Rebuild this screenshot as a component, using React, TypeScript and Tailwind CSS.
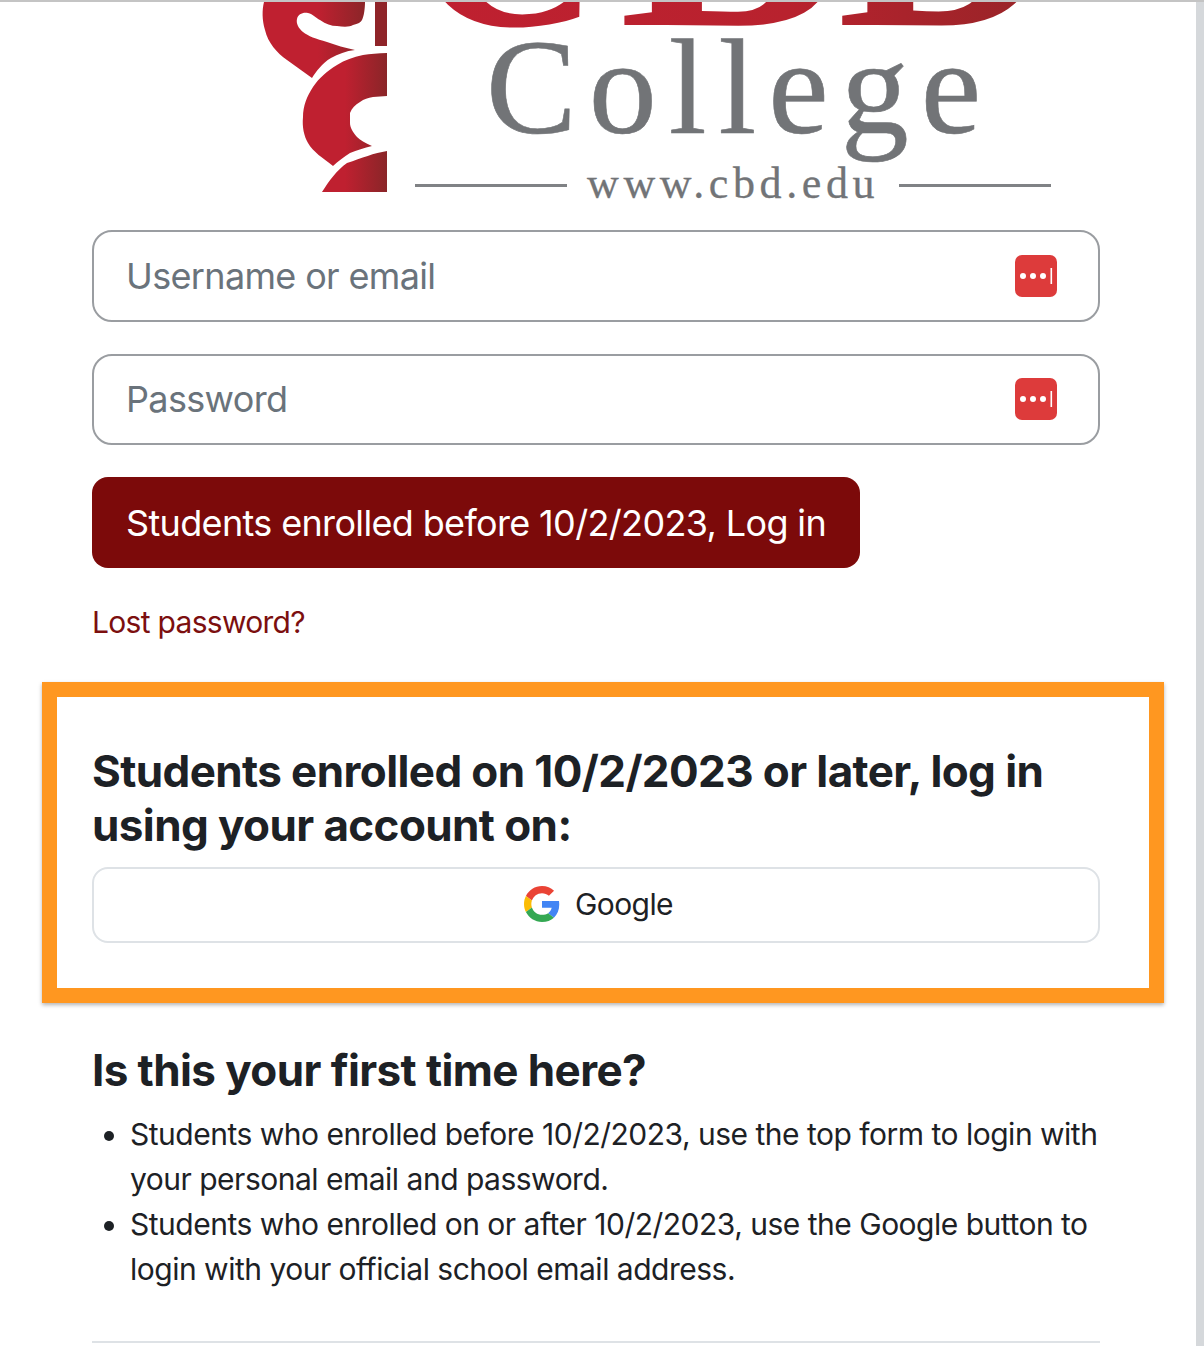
import React from 'react';

const LastPassIcon: React.FC = () => (
  <svg viewBox="0 0 42 42" className="absolute right-[43px] top-1/2 h-[42px] w-[42px] -translate-y-1/2">
    <rect width="42" height="42" rx="7" fill="#dd3b3b" />
    <circle cx="8" cy="21" r="3" fill="#fff" />
    <circle cx="18" cy="21" r="3" fill="#fff" />
    <circle cx="28" cy="21" r="3" fill="#fff" />
    <rect x="35.5" y="13" width="1.6" height="16" fill="#fff" />
  </svg>
);

const GoogleIcon: React.FC = () => (
  <svg viewBox="0 0 48 48" className="h-[36px] w-[36px]">
    <path fill="#EA4335" d="M24 9.5c3.54 0 6.71 1.22 9.21 3.6l6.85-6.85C35.9 2.38 30.47 0 24 0 14.62 0 6.51 5.38 2.56 13.22l7.98 6.19C12.43 13.72 17.74 9.5 24 9.5z" />
    <path fill="#4285F4" d="M46.98 24.55c0-1.57-.15-3.09-.38-4.55H24v9.02h12.94c-.58 2.96-2.26 5.48-4.78 7.18l7.73 6c4.51-4.18 7.09-10.36 7.09-17.65z" />
    <path fill="#FBBC05" d="M10.53 28.59c-.48-1.45-.76-2.99-.76-4.59s.27-3.14.76-4.59l-7.98-6.19C.92 16.46 0 20.12 0 24c0 3.88.92 7.54 2.56 10.78l7.97-6.19z" />
    <path fill="#34A853" d="M24 48c6.48 0 11.93-2.13 15.89-5.81l-7.73-6c-2.15 1.45-4.92 2.3-8.16 2.3-6.26 0-11.57-4.22-13.47-9.91l-7.98 6.19C6.51 42.62 14.62 48 24 48z" />
  </svg>
);

const Logo: React.FC = () => (
  <svg viewBox="260 2 800 228" className="ml-[260px] block h-[228px] w-[800px]">
    <defs>
      <linearGradient id="snakeTop" gradientUnits="userSpaceOnUse" x1="318" y1="0" x2="366" y2="0">
        <stop offset="0" stopColor="#bf2030" />
        <stop offset="1" stopColor="#8a2528" />
      </linearGradient>
      <linearGradient id="snakeMid" gradientUnits="userSpaceOnUse" x1="345" y1="0" x2="387" y2="0">
        <stop offset="0" stopColor="#bf2030" />
        <stop offset="1" stopColor="#8a2528" />
      </linearGradient>
      <linearGradient id="letters" gradientUnits="userSpaceOnUse" x1="440" y1="0" x2="1020" y2="0">
        <stop offset="0" stopColor="#bf2030" />
        <stop offset="0.6" stopColor="#b8222e" />
        <stop offset="1" stopColor="#9a2428" />
      </linearGradient>
    </defs>
    <path
      fill="url(#snakeTop)"
      d="M264 2C262 10 262 20 265 30C268 43 277 53 287 60L312 78C316 72 322 63 331 58C338 54 346 51 355 50C345 48 336 45 327 42C316 39 308 36 303 32C298 28 296 23 297 19C298 14 303 12 308 13C313 14 316 18 320 20C326 24 331 26 337 26C344 27 350 27 353 25C358 24 361 22 362 20C364 16 365 8 365 2Z"
    />
    <rect x="375" y="2" width="12" height="44" fill="#8f2429" />
    <path
      fill="url(#snakeMid)"
      d="M387 53C378 53 370 54 363 55C353 57 345 60 337 65C327 71 319 78 313 87C307 96 303 106 303 117C302 127 304 136 308 143C313 152 323 158 333 166C338 161 344 157 350 153C357 150 364 148 372 146C365 143 360 140 357 137C353 132 350 128 350 123V113C352 108 355 105 360 102C364 99 368 98 373 97L387 96Z"
    />
    <path fill="url(#snakeMid)" d="M387 151C374 153 362 158 347 163C337 170 329 181 322 192H387Z" />
    <text y="25" x="411" textLength="189" lengthAdjust="spacingAndGlyphs" fontFamily="'Liberation Serif', serif" fontWeight="700" fontSize="262" fill="url(#letters)">
      C
    </text>
    <text y="25" x="619" textLength="217" lengthAdjust="spacingAndGlyphs" fontFamily="'Liberation Serif', serif" fontWeight="700" fontSize="262" fill="url(#letters)">
      B
    </text>
    <text y="25" x="837" textLength="216" lengthAdjust="spacingAndGlyphs" fontFamily="'Liberation Serif', serif" fontWeight="700" fontSize="262" fill="url(#letters)">
      D
    </text>
    <text x="486" y="133" fontFamily="'Liberation Serif', serif" fontSize="136" letterSpacing="12" fill="#727477" stroke="#727477" strokeWidth="0.6">
      College
    </text>
    <rect x="415" y="184" width="152" height="3" fill="#808285" />
    <text x="587" y="198" fontFamily="'Liberation Serif', serif" fontSize="44" letterSpacing="4.6" fill="#727477" stroke="#727477" strokeWidth="0.3">
      www.cbd.edu
    </text>
    <rect x="899" y="184" width="152" height="3" fill="#808285" />
  </svg>
);

const LoginField: React.FC<{ placeholder: string; type?: string }> = ({ placeholder, type = 'text' }) => (
  <div className="relative">
    <input
      type={type}
      placeholder={placeholder}
      className="block h-[91.5px] w-full rounded-[20px] border-2 border-[#9a9da1] bg-white px-[32px] text-[36px] tracking-[-0.65px] text-[#1d2125] placeholder:text-[#6a737b]"
    />
    <LastPassIcon />
  </div>
);

export default function App() {
  return (
    <div className="flex h-[1346px] w-[1204px] flex-col overflow-hidden bg-white font-['Inter',sans-serif] text-[#1d2125]">
      <div className="h-[2px] bg-[#c4c4c4]" />
      <div className="flex min-h-0 flex-1">
        <main className="w-[1196px]">
          <Logo />

          <form className="flex flex-col gap-[32px] pl-[92px] pr-[96px]">
            <LoginField placeholder="Username or email" />
            <LoginField placeholder="Password" type="password" />
            <button
              type="button"
              className="h-[91px] w-[768px] rounded-[16px] bg-[#7c0a0a] text-[36px] tracking-[-0.65px] text-white"
            >
              Students enrolled before 10/2/2023, Log in
            </button>
          </form>

          <a href="#" className="ml-[92px] mt-[36px] block text-[30px] leading-[36px] tracking-[-0.7px] text-[#7c0f0f]">
            Lost password?
          </a>

          <section className="ml-[42px] mt-[42px] w-[1122px] border-[15px] border-[#ff9720] pb-[45px] pl-[35px] pr-[49px] pt-[47px] shadow-[0_2px_4px_rgba(0,0,0,0.3)]">
            <h2 className="text-[44px] font-bold leading-[54px] tracking-[-0.6px]">
              Students enrolled on 10/2/2023 or later, log in
              <br />
              using your account on:
            </h2>
            <button
              type="button"
              className="mt-[15px] flex h-[76px] w-full items-center justify-center gap-[15px] rounded-[16px] border-2 border-[#dee2e6] bg-white pb-[2px] pl-[5px] text-[30px] tracking-[-0.6px]"
            >
              <GoogleIcon />
              Google
            </button>
          </section>

          <section className="ml-[92px] mr-[96px] mt-[40px]">
            <h2 className="text-[44px] font-bold leading-[54px] tracking-[-0.6px]">Is this your first time here?</h2>
            <ul className="mt-[15px] list-disc whitespace-nowrap pl-[38px] text-[30px] leading-[45px] tracking-[-0.5px]">
              <li>
                Students who enrolled before 10/2/2023, use the top form to login with
                <br />
                your personal email and password.
              </li>
              <li>
                Students who enrolled on or after 10/2/2023, use the Google button to
                <br />
                login with your official school email address.
              </li>
            </ul>
            <hr className="mt-[49px] border-t-2 border-[#dee2e6]" />
          </section>
        </main>
        <div className="w-[8px] bg-[#d5d8db]" />
      </div>
    </div>
  );
}
